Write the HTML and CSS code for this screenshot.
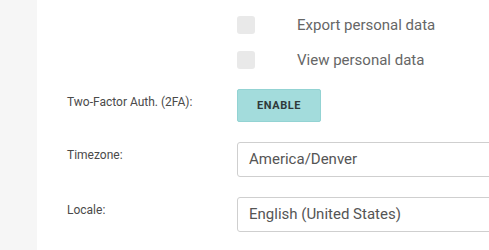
FILE: index.html
```html
<!DOCTYPE html>
<html>
<head>
<meta charset="utf-8">
<link rel="stylesheet" href="styles.css">
</head>
<body>
<div class="layout">
  <aside class="sidebar"></aside>
  <main class="main">
    <div class="checks">
      <div class="check-row"><span class="box"></span><span class="check-text">Export personal data</span></div>
      <div class="check-row"><span class="box"></span><span class="check-text">View personal data</span></div>
    </div>
    <div class="form-row">
      <label class="label">Two-Factor Auth. (2FA):</label>
      <button class="btn">ENABLE</button>
    </div>
    <div class="form-row">
      <label class="label">Timezone:</label>
      <div class="input">America/Denver</div>
    </div>
    <div class="form-row">
      <label class="label">Locale:</label>
      <div class="input">English (United States)</div>
    </div>
  </main>
</div>
</body>
</html>
```
FILE: styles.css
```css
html, body {
  margin: 0;
  padding: 0;
  background: #fff;
  overflow: hidden;
}
body {
  font-family: Roboto, "Liberation Sans", sans-serif;
  width: 489px;
  height: 250px;
}
.layout {
  display: flex;
  height: 250px;
}
.sidebar {
  width: 37px;
  flex: none;
  background: #f6f6f6;
}
.main {
  flex: 1;
  padding: 16px 0 0 30px;
  min-width: 0;
  overflow: hidden;
}
.checks {
  display: flex;
  flex-direction: column;
  gap: 17px;
  padding-left: 170px;
}
.check-row {
  display: flex;
  align-items: center;
  height: 18px;
}
.box {
  width: 18px;
  height: 18px;
  border-radius: 3px;
  background: #e9e9e9;
  flex: none;
}
.check-text {
  margin-left: 42px;
  font-size: 15px;
  line-height: 18px;
  color: #666;
  white-space: nowrap;
}
.form-row {
  display: flex;
  align-items: flex-start;
  margin-top: 20px;
}
.label {
  width: 170px;
  flex: none;
  padding-top: 6px;
  font-size: 12px;
  color: #4a4a4a;
}
.btn {
  width: 84px;
  height: 33px;
  box-sizing: border-box;
  background: #a3dcdc;
  border: 1px solid #93d3d3;
  border-radius: 2px;
  font-family: Roboto, sans-serif;
  font-weight: bold;
  font-size: 11px;
  color: #2f3a3a;
  letter-spacing: 0.6px;
  padding: 0;
}
.input {
  width: 300px;
  height: 35px;
  flex: none;
  box-sizing: border-box;
  border: 1px solid #cfcfcf;
  border-radius: 3px;
  padding: 0 11px;
  font-size: 15px;
  line-height: 33px;
  color: #555;
  white-space: nowrap;
}
```
